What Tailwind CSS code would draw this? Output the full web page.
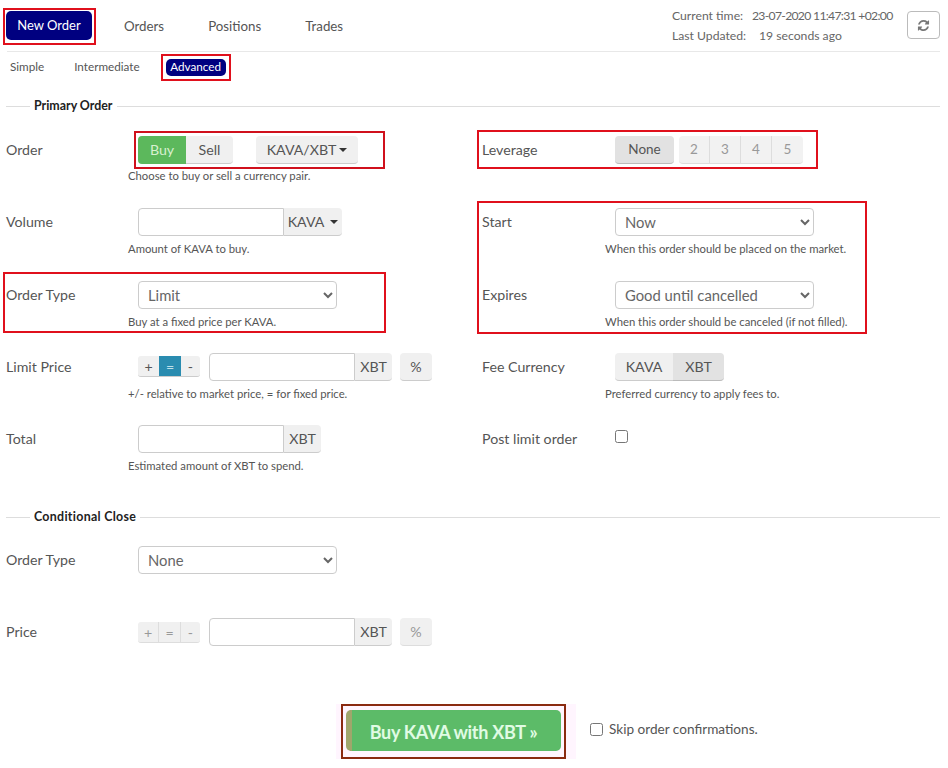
<!DOCTYPE html>
<html lang="en">
<head>
  <meta charset="UTF-8" />
  <title>New Order</title>
  <script src="https://cdn.jsdelivr.net/npm/@tailwindcss/browser@4"></script>
</head>
<body class="bg-white font-['Lato',sans-serif] text-[14.2px] text-[#555]">
  <div class="relative w-[948px] h-[768px] overflow-hidden">

    <!-- top nav -->
    <div class="ml-[7px] mr-[8px] h-[52px] border-b border-[#e8e8e8] flex text-[13.3px]">
      <a class="ml-[-1px] mt-[11px] w-[86px] h-[29px] rounded-[5px] bg-[#000080] text-white text-[13px] flex items-center justify-center">New Order</a>
      <a class="ml-[32px] mt-[17px]">Orders</a>
      <a class="ml-[44px] mt-[17px]">Positions</a>
      <a class="ml-[44px] mt-[17px]">Trades</a>
      <div class="ml-auto mt-[6px] text-[12.2px] leading-[20px] text-[#666] w-[221px] whitespace-nowrap">
        <div class="flex"><span class="w-[80px]">Current time:</span><span class="tracking-[-0.7px]">23-07-2020 11:47:31 +02:00</span></div>
        <div class="flex"><span class="w-[87px]">Last Updated:</span><span>19 seconds ago</span></div>
      </div>
      <button class="ml-[14px] mt-[11px] w-[33px] h-[28px] rounded-[4px] border border-[#bbb] flex items-center justify-center">
        <svg class="w-[13px] h-[13px]" viewBox="0 0 1792 1792" fill="#777"><path d="M1639 1056q0 5-1 7-64 268-268 434.5t-478 166.5q-146 0-282.5-55t-243.5-157l-129 129q-19 19-45 19t-45-19-19-45v-448q0-26 19-45t45-19h448q26 0 45 19t19 45-19 45l-137 137q71 66 161 102t187 36q134 0 250-65t186-179q11-17 53-117 8-23 30-23h192q13 0 22.5 9.5t9.5 22.5zm25-800v448q0 26-19 45t-45 19h-448q-26 0-45-19t-19-45 19-45l138-138q-148-137-349-137-134 0-250 65t-186 179q-11 17-53 117-8 23-30 23h-199q-13 0-22.5-9.5t-9.5-22.5v-7q65-268 270-434.5t480-166.5q146 0 284 55.5t245 156.5l130-129q19-19 45-19t45 19 19 45z"/></svg>
      </button>
    </div>

    <!-- sub tabs -->
    <div class="h-[30px] pl-[10px] flex items-center text-[11.7px]">
      <a>Simple</a>
      <a class="ml-[30px]">Intermediate</a>
      <a class="ml-[26px] h-[17px] w-[60px] rounded-[5px] bg-[#000080] text-white flex items-center justify-center">Advanced</a>
    </div>

    <!-- primary order -->
    <div class="ml-[6px] mr-[8px] mt-[15px] h-[18px] flex items-center gap-[4px] text-[12.4px] font-bold text-[#222]">
      <div class="w-[24px] border-t border-[#ddd]"></div>
      <span>Primary Order</span>
      <div class="flex-1 border-t border-[#ddd]"></div>
    </div>

    <div class="mt-[21px] grid grid-cols-[476px_1fr] auto-rows-[72.25px] pl-[6px]">
      <!-- order -->
      <div class="flex">
        <label class="w-[122px] pt-[3px]">Order</label>
        <div>
          <div class="ml-[10px] flex h-[28px]">
            <button class="w-[48px] rounded-l-[4px] bg-[#5cb85c] text-[#d8f0d0]">Buy</button>
            <button class="w-[47px] rounded-r-[4px] bg-[#f0f0f0] border-b border-[#ccc]">Sell</button>
            <button class="ml-[23px] w-[102px] rounded-[4px] bg-[#f0f0f0] border-b border-[#ccc] flex items-center justify-center gap-[3px]">KAVA/XBT<span class="border-x-[4px] border-x-transparent border-t-[4px] border-t-[#333]"></span></button>
          </div>
          <p class="mt-[5px] text-[11.3px] leading-[14px]">Choose to buy or sell a currency pair.</p>
        </div>
      </div>
      <div class="flex">
        <label class="w-[123px] pt-[3px]">Leverage</label>
        <div class="ml-[10px] flex h-[28px] text-[13.5px]">
          <button class="w-[59px] rounded-[4px] bg-[#e2e2e2] border-b border-[#bbb]">None</button>
          <div class="ml-[5px] flex rounded-[4px] bg-[#f2f2f2] border-b border-[#ddd] text-[#999]">
            <button class="w-[31px] border-r border-[#ddd]">2</button>
            <button class="w-[31px] border-r border-[#ddd]">3</button>
            <button class="w-[31px] border-r border-[#ddd]">4</button>
            <button class="w-[31px]">5</button>
          </div>
        </div>
      </div>

      <!-- volume -->
      <div class="flex">
        <label class="w-[122px] pt-[3px]">Volume</label>
        <div>
          <div class="ml-[10px] flex h-[28px]">
            <input class="w-[146px] border border-[#ccc] rounded-l-[4px]" />
            <button class="w-[58px] rounded-r-[4px] bg-[#f0f0f0] border-b border-[#ccc] flex items-center justify-center gap-[6px]">KAVA<span class="border-x-[4px] border-x-transparent border-t-[4px] border-t-[#333]"></span></button>
          </div>
          <p class="mt-[6px] text-[11.3px] leading-[14px]">Amount of KAVA to buy.</p>
        </div>
      </div>
      <div class="flex">
        <label class="w-[123px] pt-[3px]">Start</label>
        <div>
          <select class="ml-[10px] block w-[199px] h-[28px] pl-[5px] border border-[#ccc] rounded-[4px] bg-white text-[14.8px] text-[#666]"><option>Now</option></select>
          <p class="mt-[6px] text-[11.3px] leading-[14px]">When this order should be placed on the market.</p>
        </div>
      </div>

      <!-- order type -->
      <div class="flex">
        <label class="w-[122px] pt-[3px]">Order Type</label>
        <div>
          <select class="ml-[10px] block w-[199px] h-[28px] pl-[5px] border border-[#ccc] rounded-[4px] bg-white text-[14.8px] text-[#666]"><option>Limit</option></select>
          <p class="mt-[6px] text-[11.3px] leading-[14px]">Buy at a fixed price per KAVA.</p>
        </div>
      </div>
      <div class="flex">
        <label class="w-[123px] pt-[3px]">Expires</label>
        <div>
          <select class="ml-[10px] block w-[199px] h-[28px] pl-[5px] border border-[#ccc] rounded-[4px] bg-white text-[14.8px] text-[#666]"><option>Good until cancelled</option></select>
          <p class="mt-[6px] text-[11.3px] leading-[14px]">When this order should be canceled (if not filled).</p>
        </div>
      </div>

      <!-- limit price -->
      <div class="flex">
        <label class="w-[122px] pt-[3px]">Limit Price</label>
        <div>
          <div class="ml-[10px] flex h-[28px] items-center">
            <div class="flex h-[21px] rounded-[3px] bg-[#f0f0f0] border-b border-[#ccc] overflow-hidden">
              <button class="w-[21px]">+</button>
              <button class="w-[22px] bg-[#2a8cb0] text-[#bfe0ea]">=</button>
              <button class="w-[19px]">-</button>
            </div>
            <input class="ml-[9px] w-[146px] h-[28px] border border-[#ccc] rounded-l-[4px]" />
            <span class="w-[37px] h-[28px] rounded-r-[4px] bg-[#f0f0f0] border-b border-[#ccc] flex items-center justify-center">XBT</span>
            <button class="ml-[8px] w-[32px] h-[28px] rounded-[4px] bg-[#f0f0f0] border-b border-[#ccc]">%</button>
          </div>
          <p class="mt-[6px] text-[11.3px] leading-[14px]">+/- relative to market price, = for fixed price.</p>
        </div>
      </div>
      <div class="flex">
        <label class="w-[123px] pt-[3px]">Fee Currency</label>
        <div>
          <div class="ml-[10px] flex h-[28px]">
            <button class="w-[58px] rounded-l-[4px] bg-[#f0f0f0] border-b border-[#ccc]">KAVA</button>
            <button class="w-[51px] rounded-r-[4px] bg-[#e2e2e2] border-b border-[#bbb]">XBT</button>
          </div>
          <p class="mt-[6px] text-[11.3px] leading-[14px]">Preferred currency to apply fees to.</p>
        </div>
      </div>

      <!-- total -->
      <div class="flex">
        <label class="w-[122px] pt-[3px]">Total</label>
        <div>
          <div class="ml-[10px] flex h-[28px]">
            <input class="w-[146px] border border-[#ccc] rounded-l-[4px]" />
            <span class="w-[37px] rounded-r-[4px] bg-[#f0f0f0] border-b border-[#ccc] flex items-center justify-center">XBT</span>
          </div>
          <p class="mt-[6px] text-[11.3px] leading-[14px]">Estimated amount of XBT to spend.</p>
        </div>
      </div>
      <div class="flex">
        <label class="w-[123px] pt-[3px]">Post limit order</label>
        <input type="checkbox" class="ml-[10px] mt-[5px] w-[13px] h-[13px] self-start" />
      </div>
    </div>

    <!-- conditional close -->
    <div class="ml-[6px] mr-[8px] mt-[11px] h-[18px] flex items-center gap-[4px] text-[12.4px] font-bold tracking-[0.3px] text-[#222]">
      <div class="w-[24px] border-t border-[#ddd]"></div>
      <span>Conditional Close</span>
      <div class="flex-1 border-t border-[#ddd]"></div>
    </div>

    <div class="pl-[6px] mt-[20px]">
      <div class="flex h-[72px]">
        <label class="w-[122px] pt-[3px]">Order Type</label>
        <select class="ml-[10px] block w-[199px] h-[28px] pl-[5px] border border-[#ccc] rounded-[4px] bg-white text-[14.8px] text-[#666]"><option>None</option></select>
      </div>
      <div class="flex h-[56px]">
        <label class="w-[122px] pt-[3px]">Price</label>
        <div class="ml-[10px] flex h-[28px] items-center">
          <div class="flex h-[21px] rounded-[3px] bg-[#f0f0f0] border-b border-[#ddd] text-[#999] overflow-hidden">
            <button class="w-[21px] border-r border-[#ddd]">+</button>
            <button class="w-[22px] border-r border-[#ddd]">=</button>
            <button class="w-[19px]">-</button>
          </div>
          <input class="ml-[9px] w-[146px] h-[28px] border border-[#ccc] rounded-l-[4px]" />
          <span class="w-[37px] h-[28px] rounded-r-[4px] bg-[#f0f0f0] border-b border-[#ccc] flex items-center justify-center">XBT</span>
          <button class="ml-[8px] w-[32px] h-[28px] rounded-[4px] bg-[#f0f0f0] border-b border-[#ddd] text-[#999]">%</button>
        </div>
      </div>
    </div>

    <!-- submit -->
    <div class="mt-[36px] ml-[346px] flex items-start">
      <button class="w-[215px] h-[41px] rounded-[5px] bg-[#5cbb68] border-l-[6px] border-[#a0a66c] pr-[6px] pt-[3px] text-[#e0fbe4] text-[18px] font-bold tracking-[-0.3px]">Buy KAVA with XBT »</button>
      <label class="ml-[29px] mt-[9px] flex items-center gap-[6px] text-[13.6px]"><input type="checkbox" class="w-[13px] h-[13px]" />Skip order confirmations.</label>
    </div>

    <!-- annotation boxes -->
    <div class="absolute left-[3px] top-[8px] w-[93px] h-[37px] border-2 border-[#e0101c]"></div>
    <div class="absolute left-[161px] top-[54px] w-[70px] h-[27px] border-2 border-[#e0101c]"></div>
    <div class="absolute left-[134px] top-[131px] w-[251px] h-[38px] border-2 border-[#d0101c]"></div>
    <div class="absolute left-[477px] top-[130px] w-[341px] h-[39px] border-2 border-[#e0101c]"></div>
    <div class="absolute left-[477px] top-[201px] w-[390px] h-[133px] border-2 border-[#e0101c]"></div>
    <div class="absolute left-[3px] top-[272px] w-[383px] h-[61px] border-2 border-[#e0101c]"></div>
    <div class="absolute left-[336px] top-[704px] w-[240px] h-[55px] bg-[#fff5fe] -z-10"></div>
    <div class="absolute left-[341px] top-[704px] w-[225px] h-[55px] border-2 border-[#8a2a10]"></div>
  </div>
</body>
</html>
